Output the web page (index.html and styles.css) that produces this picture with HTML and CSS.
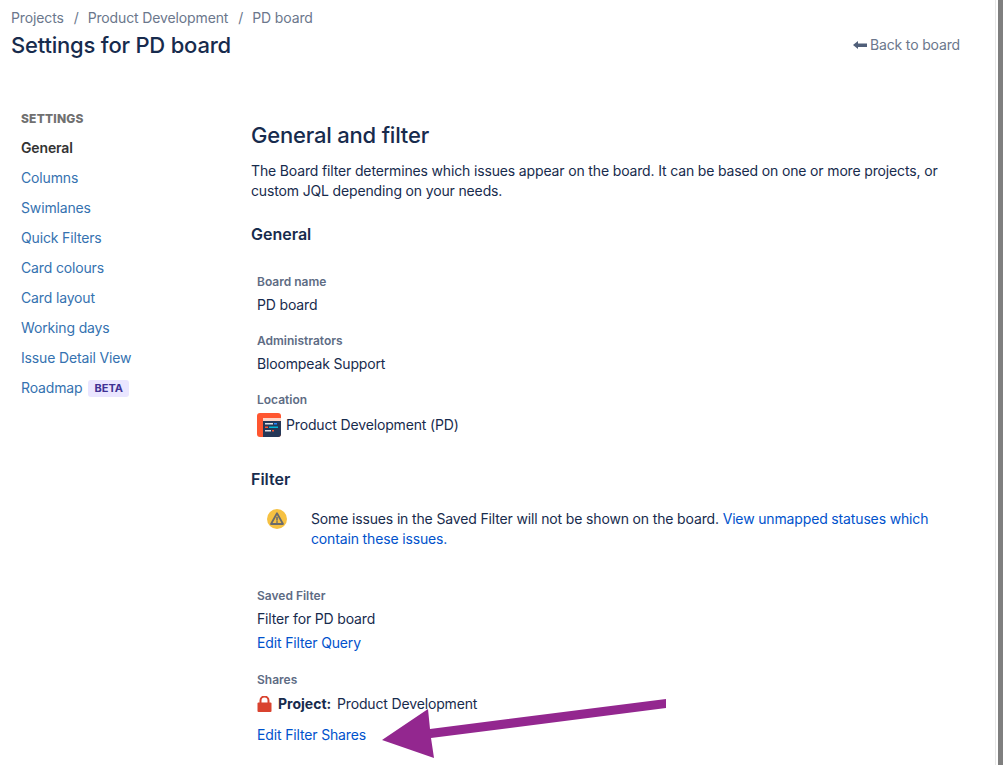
FILE: index.html
```html
<!DOCTYPE html>
<html lang="en">
<head>
<meta charset="utf-8">
<title>Settings for PD board</title>
<link rel="stylesheet" href="styles.css">
</head>
<body>
<div class="page">
  <header class="head">
    <nav class="crumbs"><span>Projects</span><i>/</i><span>Product Development</span><i>/</i><span>PD board</span></nav>
    <div class="title-row">
      <h1>Settings for PD board</h1>
      <a class="back"><svg class="back-ico" width="14" height="10" viewBox="0 0 14 10"><path d="M0 5 L5 1 V3.4 H14 V7 H5 V9 Z" fill="#505f79"/></svg>Back to board</a>
    </div>
  </header>
  <div class="cols">
    <aside class="side">
      <div class="side-h">SETTINGS</div>
      <a class="cur">General</a>
      <a>Columns</a>
      <a>Swimlanes</a>
      <a>Quick Filters</a>
      <a>Card colours</a>
      <a>Card layout</a>
      <a>Working days</a>
      <a>Issue Detail View</a>
      <a>Roadmap<span class="beta">BETA</span></a>
    </aside>
    <main class="main">
      <h2>General and filter</h2>
      <p class="intro">The Board filter determines which issues appear on the board. It can be based on one or more projects, or custom JQL depending on your needs.</p>
      <h3 class="h-general">General</h3>
      <div class="fields general">
        <div class="lbl">Board name</div>
        <div class="val">PD board</div>
        <div class="lbl gap">Administrators</div>
        <div class="val">Bloompeak Support</div>
        <div class="lbl gap">Location</div>
        <div class="val loc">
          <svg width="24" height="24" viewBox="0 0 24 24"><rect width="24" height="24" rx="3" fill="#ff5630"/><path d="M6 8 H24 V21 a3 3 0 0 1 -3 3 H6 Z" fill="#253858"/><rect x="6" y="5" width="18" height="3" fill="#ffd5c8"/><rect x="8" y="10" width="8" height="1.5" fill="#dfe1e6"/><rect x="17" y="10" width="3" height="1.5" fill="#2684ff"/><rect x="8" y="13.5" width="3" height="1.5" fill="#ff5630"/><rect x="12" y="13.5" width="9" height="1.5" fill="#00b8d9"/><rect x="8" y="17" width="6" height="1.5" fill="#dfe1e6"/><rect x="15" y="17" width="2" height="1.5" fill="#ff5630"/></svg>
          <span>Product Development (PD)</span>
        </div>
      </div>
      <h3 class="h-filter">Filter</h3>
      <div class="warn">
        <svg class="warn-ico" width="20" height="20" viewBox="0 0 20 20"><circle cx="10" cy="10" r="10" fill="#f6c142"/><path d="M10 4.2 L16 15 H4 Z" fill="none" stroke="#6b6b6b" stroke-width="1.8" stroke-linejoin="round"/><rect x="9.2" y="7.8" width="1.6" height="3.8" fill="#6b6b6b"/><rect x="9.2" y="12.2" width="1.6" height="1.6" fill="#6b6b6b"/></svg>
        <p>Some issues in the Saved Filter will not be shown on the board. <a>View unmapped statuses which contain these issues.</a></p>
      </div>
      <div class="fields saved">
        <div class="lbl">Saved Filter</div>
        <div class="val first">Filter for PD board</div>
        <div class="val query"><a>Edit Filter Query</a></div>
        <div class="lbl gap2">Shares</div>
        <div class="val share">
          <svg width="15" height="16" viewBox="0 0 15 16"><path d="M3.5 7 V4.5 a4 4 0 0 1 8 0 V7" fill="none" stroke="#d9432f" stroke-width="2"/><rect x="0.5" y="6.5" width="14" height="9.5" rx="1" fill="#d9432f"/></svg>
          <span><b>Project:</b> Product Development</span>
        </div>
        <div class="val edit"><a>Edit Filter Shares</a></div>
      </div>
    </main>
  </div>
</div>
<div class="scrollbar"></div>
<svg class="arrow" width="300" height="70" viewBox="0 0 300 70"><path d="M285 8 L285 17 L50 47 L53 67 L1 49 L47 18 L49 38 Z" fill="#93278f"/></svg>
</body>
</html>
```
FILE: styles.css
```css
* { box-sizing: border-box; }
html, body { margin: 0; height: 765px; overflow: hidden; background: #fff; }
body { font-family: Inter, "Liberation Sans", sans-serif; font-size: 14px; line-height: 20px; letter-spacing: -0.15px; color: #172b4d; position: relative; }
.page { width: 1000px; }
.head { padding: 8px 40px 0 11px; }
.crumbs { display: flex; color: #6b778c; height: 20px; letter-spacing: -0.13px; }
.crumbs i { font-style: normal; margin: 0 9px 0 10px; }
.title-row { display: flex; justify-content: space-between; align-items: center; height: 36px; }
h1 { margin: 0 0 2px; font-size: 22px; font-weight: 500; line-height: 34px; letter-spacing: -0.2px; }
.back { color: #6b778c; display: flex; align-items: center; margin-top: -2px; }
.back-ico { margin-right: 3px; }
.cols { display: flex; padding-top: 43px; }
.side { width: 251px; padding-left: 21px; padding-top: 2px; display: flex; flex-direction: column; }
.side-h { font-size: 12px; font-weight: 800; color: #707070; height: 20px; line-height: 20px; margin-bottom: 9px; letter-spacing: 0.2px; }
.side a { color: #3572b0; height: 30px; line-height: 20px; }
.side a.cur { color: #333; font-weight: 600; }
.beta { display: inline-block; margin-left: 6px; padding: 0 6px; height: 17px; line-height: 17px; border-radius: 3px; background: #eae6ff; color: #403294; font-size: 11px; font-weight: 700; letter-spacing: 0; vertical-align: 1px; }
.main { flex: 1; width: 700px; padding-right: 60px; }
h2 { margin: 0; font-size: 22px; font-weight: 500; line-height: 28px; padding-top: 14px; letter-spacing: -0.2px; }
.intro { margin: 12px 0 0; }
h3 { margin: 0; font-size: 16px; font-weight: 600; line-height: 20px; letter-spacing: 0; }
.h-general { margin-top: 23px; }
.fields { padding-left: 6px; }
.general { margin-top: 30px; }
.lbl { font-size: 12px; font-weight: 600; color: #5e6c84; line-height: 16px; letter-spacing: 0; }
.val { line-height: 20px; margin-top: 5px; }
.gap { margin-top: 18px; }
.loc { display: flex; align-items: center; gap: 5px; height: 24px; }
.h-filter { margin-top: 32px; }
.warn { display: flex; margin-top: 20px; padding-left: 16px; }
.warn-ico { margin-right: 24px; flex: none; }
.warn p { margin: 0; }
a { color: #0052cc; }
.saved { margin-top: 39px; }
.first { margin-top: 5px; }
.query { margin-top: 4px; }
.gap2 { margin-top: 19px; }
.share { display: flex; align-items: center; gap: 6px; margin-top: 6px; }
.edit { margin-top: 11px; }
b { font-weight: 700; letter-spacing: 0; margin-right: 2px; }
.scrollbar { position: absolute; left: 995px; top: 0; width: 8px; height: 765px; background: #fff; border-left: 1px solid #e8e8e8; border-right: 5px solid #7f7f7f; }
.arrow { position: absolute; left: 381px; top: 691px; }
```
